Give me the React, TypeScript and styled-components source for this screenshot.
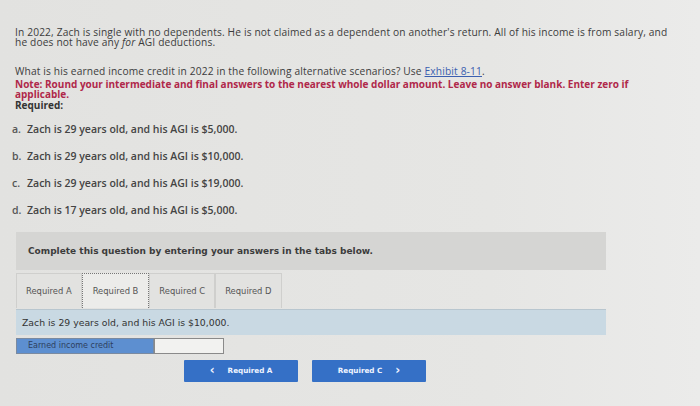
import styled, { createGlobalStyle } from 'styled-components';

const GlobalStyle = createGlobalStyle`
  html, body {
    margin: 0;
    padding: 0;
    background: #e4e4e2;
  }
  body {
    font-family: "Open Sans", "Liberation Sans", sans-serif;
    color: #3a3a3a;
  }
`;

const scenarios = [
  { key: 'a', text: 'Zach is 29 years old, and his AGI is $5,000.' },
  { key: 'b', text: 'Zach is 29 years old, and his AGI is $10,000.' },
  { key: 'c', text: 'Zach is 29 years old, and his AGI is $19,000.' },
  { key: 'd', text: 'Zach is 17 years old, and his AGI is $5,000.' },
];

const tabs = ['Required A', 'Required B', 'Required C', 'Required D'];

const App: React.FC = () => {
  return (
    <Page>
      <GlobalStyle />
      <Intro>
        In 2022, Zach is single with no dependents. He is not claimed as a dependent on another's return. All of his
        income is from salary, and he does not have any <em>for</em> AGI deductions.
      </Intro>
      <Question>
        What is his earned income credit in 2022 in the following alternative scenarios? Use <Link>Exhibit 8-11</Link>.
      </Question>
      <Note>
        Note: Round your intermediate and final answers to the nearest whole dollar amount. Leave no answer blank. Enter
        zero if applicable.
      </Note>
      <RequiredLabel>Required:</RequiredLabel>
      <List>
        {scenarios.map((s) => (
          <Item key={s.key}>
            <Marker>{s.key}.</Marker>
            {s.text}
          </Item>
        ))}
      </List>
      <Panel>
        <Banner>Complete this question by entering your answers in the tabs below.</Banner>
        <Tabs>
          {tabs.map((t, i) => (
            <Tab key={t} $active={i === 1}>
              {t}
            </Tab>
          ))}
        </Tabs>
        <Prompt>Zach is 29 years old, and his AGI is $10,000.</Prompt>
        <AnswerRow>
          <AnswerLabel>Earned income credit</AnswerLabel>
          <AnswerInput />
        </AnswerRow>
        <NavRow>
          <NavButton>
            <Chevron>‹</Chevron>
            Required A
          </NavButton>
          <NavButton>
            Required C
            <Chevron>›</Chevron>
          </NavButton>
        </NavRow>
      </Panel>
    </Page>
  );
};

export default App;

const Page = styled.div`
  width: 700px;
  height: 406px;
  box-sizing: border-box;
  padding: 27px 0 0 15px;
  background: linear-gradient(90deg, #e2e2e0 0%, #e6e6e4 70%, #ebebea 100%);
  overflow: hidden;
  font-size: 10px;
  line-height: 10px;
`;

const Intro = styled.p`
  margin: 0;
  width: 655px;
  font-size: 10.2px;
  line-height: 10px;
  letter-spacing: 0.15px;
  color: #3c3c3c;
  em {
    font-style: italic;
  }
`;

const Question = styled.p`
  margin: 19px 0 0;
  font-size: 10.2px;
  letter-spacing: 0.15px;
  color: #3c3c3c;
`;

const Link = styled.span`
  color: #3b5fb0;
  text-decoration: underline;
`;

const Note = styled.p`
  margin: 3px 0 0;
  width: 640px;
  color: #b0284a;
  font-weight: 700;
`;

const RequiredLabel = styled.p`
  margin: 1px 0 0;
  font-weight: 700;
  color: #333;
`;

const List = styled.ul`
  list-style: none;
  margin: 14px 0 0 -3px;
  padding: 0;
  display: flex;
  flex-direction: column;
  gap: 17px;
`;

const Item = styled.li`
  font-size: 10.5px;
  font-weight: 600;
  color: #444;
`;

const Marker = styled.span`
  display: inline-block;
  width: 15px;
  color: #555;
`;

const Panel = styled.div`
  margin: 17px 0 0 1px;
  width: 590px;
`;

const Banner = styled.div`
  height: 38px;
  display: flex;
  align-items: center;
  padding-left: 12px;
  background: #d5d5d3;
  font-family: "DejaVu Sans", Verdana, sans-serif;
  font-weight: 700;
  font-size: 9px;
  color: #3c3c3c;
`;

const Tabs = styled.div`
  display: flex;
  margin-top: 3px;
`;

const Tab = styled.div<{ $active: boolean }>`
  height: 35px;
  box-sizing: border-box;
  display: flex;
  align-items: center;
  justify-content: center;
  padding: 0 ${(p) => (p.$active ? '10px' : '9px')};
  border: 1px ${(p) => (p.$active ? 'dotted #777' : 'solid #cfcfcd')};
  border-bottom: none;
  background: ${(p) => (p.$active ? '#ececea' : '#e2e2e0')};
  font-family: "DejaVu Sans", Verdana, sans-serif;
  font-size: 8.4px;
  color: #555;
`;

const Prompt = styled.div`
  height: 25px;
  display: flex;
  align-items: center;
  padding-left: 6px;
  margin-top: 1px;
  background: #c9d9e3;
  border-top: 1px solid #b8c6cf;
  font-family: "DejaVu Sans", Verdana, sans-serif;
  font-size: 9.3px;
  color: #333;
`;

const AnswerRow = styled.div`
  display: flex;
  margin-top: 3px;
  height: 16px;
`;

const AnswerLabel = styled.div`
  width: 138px;
  box-sizing: border-box;
  padding-left: 11px;
  display: flex;
  align-items: center;
  background: #5d8fd0;
  border: 1px solid #7a8aa0;
  font-family: "DejaVu Sans", Verdana, sans-serif;
  font-size: 8px;
  color: #2d3f60;
`;

const AnswerInput = styled.div`
  width: 70px;
  box-sizing: border-box;
  background: #f2f2f0;
  border: 1px solid #8a8a8a;
`;

const NavRow = styled.div`
  display: flex;
  gap: 14px;
  margin: 6px 0 0 168px;
`;

const NavButton = styled.div`
  width: 114px;
  height: 22px;
  display: flex;
  align-items: center;
  justify-content: center;
  gap: 13px;
  background: #3570c6;
  border-radius: 1px;
  font-family: "DejaVu Sans", Verdana, sans-serif;
  font-weight: 700;
  font-size: 7.2px;
  color: #f0f4ff;
`;

const Chevron = styled.span`
  font-size: 12px;
  font-weight: 700;
  line-height: 1;
  margin-top: -2px;
`;
